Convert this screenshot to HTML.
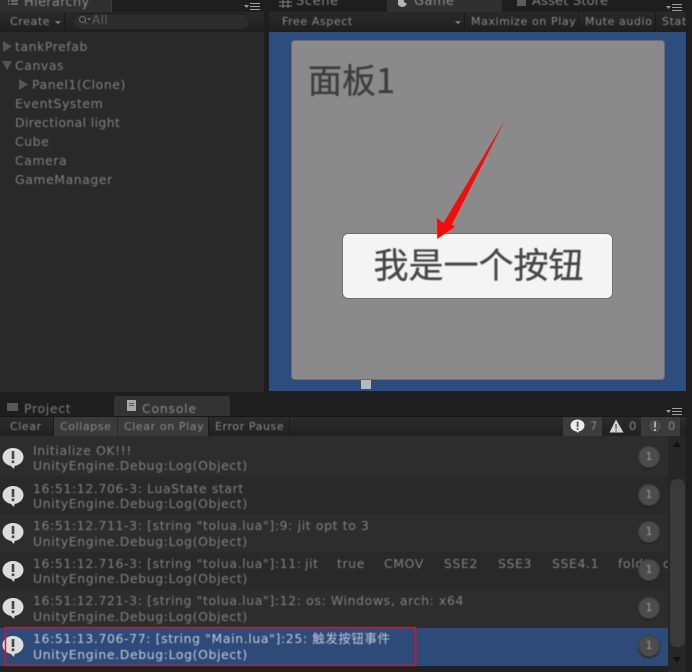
<!DOCTYPE html>
<html><head><meta charset="utf-8">
<style>
html,body{margin:0;padding:0;background:#1e1e1e;}
#p{position:relative;width:692px;height:672px;overflow:hidden;background:#1e1e1e;font-family:"DejaVu Sans","Noto Sans CJK SC",sans-serif;color:#8c8c8c;font-size:12px;}
#p div{position:absolute;white-space:nowrap;}
.t{filter:blur(.4px);}
.tb{font-size:11px;color:#8a8a8a;letter-spacing:.6px;line-height:20px;top:0;}
.h{left:15px;font-size:12.4px;line-height:19px;color:#808080;letter-spacing:.6px;}
.row{left:0;width:668px;height:38px;}
.l{left:33px;font-size:12.4px;line-height:15.5px;color:#808080;letter-spacing:.65px;}
.b{left:638px;width:22px;height:22px;border-radius:50%;background:#4c4c4c;box-shadow:0 1px 1px #1a1a1a,inset 0 0 0 1px #3d3d3d;color:#999;font-size:11px;line-height:22px;text-align:center;}
</style></head><body><div id="p">

<!-- Hierarchy tab -->
<div style="left:0;top:0;width:111px;height:12px;background:#2f2f2f;border-right:1px solid #3a3a3a;"></div>
<svg style="position:absolute;left:7px;top:0" width="12" height="8"><path d="M1 1h1.500M4 1h7M1 4h1.500M4 4h7" stroke="#8a8a8a" stroke-width="1.300"/></svg>
<div class="t" style="left:24px;top:-6px;font-size:13px;line-height:17px;letter-spacing:.3px;color:#8a8a8a;">Hierarchy</div>
<svg style="position:absolute;left:244px;top:2px" width="18" height="9"><path d="M0 3h5l-2.500 3z" fill="#9a9a9a"/><path d="M6 1.500h10M6 4.500h10M6 7.500h10" stroke="#a0a0a0" stroke-width="1.100"/></svg>

<!-- Hierarchy toolbar -->
<div style="left:0;top:12px;width:264px;height:20px;background:linear-gradient(#2a2a2a,#1f1f1f);"></div>
<div class="t tb" style="left:10px;top:12px;">Create</div>
<svg style="position:absolute;left:55px;top:21px" width="6" height="4"><path d="M0 0h6l-3 3.500z" fill="#777"/></svg>
<div style="left:64px;top:12px;width:1px;height:20px;background:#1a1a1a;"></div>
<div style="left:73px;top:13px;width:176px;height:16px;border-radius:8px;background:#2c2c2c;box-shadow:inset 0 1px 1px #1b1b1b;"></div>
<svg style="position:absolute;left:78px;top:15px" width="14" height="11"><circle cx="4.500" cy="4.500" r="3" fill="none" stroke="#6b6b6b" stroke-width="1.100"/><path d="M6.700 6.700l2.300 2.300" stroke="#6b6b6b"/><path d="M9 3h4l-2 2.500z" fill="#6b6b6b"/></svg>
<div class="t" style="left:92px;top:12px;font-size:12px;line-height:17px;color:#666;letter-spacing:.4px;">All</div>

<!-- Hierarchy list -->
<div style="left:0;top:32px;width:264px;height:360px;background:#292929;"></div>
<svg style="position:absolute;left:0;top:38px" width="35" height="60">
<path d="M3 3l9 5.500l-9 5.500z" fill="#555"/>
<path d="M2 23h10l-5 9z" fill="#555"/>
<path d="M19 41l9 5.500l-9 5.500z" fill="#555"/>
</svg>
<div class="t h" style="top:37px;">tankPrefab</div>
<div class="t h" style="top:56px;">Canvas</div>
<div class="t h" style="top:75px;left:32px;">Panel1(Clone)</div>
<div class="t h" style="top:94px;">EventSystem</div>
<div class="t h" style="top:113px;letter-spacing:.4px;">Directional light</div>
<div class="t h" style="top:132px;">Cube</div>
<div class="t h" style="top:151px;">Camera</div>
<div class="t h" style="top:170px;">GameManager</div>

<!-- Scene/Game tabs -->
<svg style="position:absolute;left:279px;top:0" width="14" height="9"><path d="M4 0v8M9 0v8M0 2h13M0 6h13" stroke="#808080" stroke-width="1"/></svg>
<div class="t" style="left:296px;top:-7px;font-size:13px;line-height:17px;letter-spacing:.6px;color:#808080;">Scene</div>
<div style="left:387px;top:0;width:115px;height:12px;background:#303030;"></div>
<svg style="position:absolute;left:398px;top:0" width="12" height="8"><path d="M4 -3a5 5 0 1 0 5 6.500a4 3 0 0 1-3-3.500z" fill="#b5b5b5"/></svg>
<div class="t" style="left:414px;top:-7px;font-size:13px;line-height:17px;letter-spacing:.4px;color:#8a8a8a;">Game</div>
<div style="left:517px;top:0;width:9px;height:6px;background:#5c5c5c;"></div>
<div class="t" style="left:532px;top:-7px;font-size:13px;line-height:17px;letter-spacing:.2px;color:#808080;">Asset Store</div>
<svg style="position:absolute;left:666px;top:3px" width="18" height="9"><path d="M0 3h5l-2.500 3z" fill="#9a9a9a"/><path d="M6 1.500h10M6 4.500h10M6 7.500h10" stroke="#a0a0a0" stroke-width="1.100"/></svg>

<!-- Game toolbar -->
<div style="left:269px;top:12px;width:417px;height:20px;background:linear-gradient(#2a2a2a,#1e1e1e);"></div>
<div class="t tb" style="left:282px;top:12px;">Free Aspect</div>
<svg style="position:absolute;left:455px;top:21px" width="6" height="4"><path d="M0 0h6l-3 3.500z" fill="#777"/></svg>
<div style="left:464px;top:12px;width:1px;height:20px;background:#1a1a1a;"></div>
<div class="t tb" style="left:471px;top:12px;">Maximize on Play</div>
<div style="left:578px;top:12px;width:1px;height:20px;background:#1a1a1a;"></div>
<div class="t tb" style="left:585px;top:12px;">Mute audio</div>
<div style="left:655px;top:12px;width:1px;height:20px;background:#1a1a1a;"></div>
<div class="t tb" style="left:662px;top:12px;width:24px;overflow:hidden;">Stats</div>

<!-- Game view -->
<div style="left:269px;top:32px;width:417px;height:359px;background:#2d4d7e;"></div>
<div style="left:292px;top:41px;width:372px;height:338px;background:#8a8a8a;border-radius:3px;box-shadow:0 0 0 1px #6e6e6e;"></div>
<div class="t" style="left:308px;top:57px;font-size:34px;line-height:44px;color:#3d3d3d;font-family:'Noto Sans CJK SC',sans-serif;-webkit-text-stroke:.3px #3d3d3d;">面板1</div>
<div style="left:343px;top:234px;width:269px;height:64px;background:#f4f4f4;border-radius:5px;box-shadow:0 0 0 1px #6f6f6f;"></div>
<div class="t" style="left:344px;top:233px;width:269px;height:65px;text-align:center;font-size:35px;line-height:61px;color:#464646;font-family:'Noto Sans CJK SC',sans-serif;-webkit-text-stroke:.3px #464646;">我是一个按钮</div>
<svg style="position:absolute;left:0;top:0" width="692" height="300"><path d="M504.500 121L452 224.500L455 226.700L437.300 239L437 218L443.500 223Z" fill="#f70a0a"/></svg>
<div style="left:361px;top:380px;width:10px;height:9px;background:#b9b9b9;"></div>

<!-- Console tabs -->
<div style="left:7px;top:403px;width:11px;height:8px;background:#585858;"></div>
<div class="t" style="left:24px;top:400px;font-size:12.400px;line-height:17px;letter-spacing:.7px;color:#7c7c7c;">Project</div>
<div style="left:114px;top:396px;width:116px;height:20px;background:#333;border-radius:3px 3px 0 0;"></div>
<div style="left:127px;top:400px;width:9px;height:11px;background:#a8a8a8;"></div>
<div style="left:129px;top:403px;width:5px;height:1px;background:#555;"></div>
<div style="left:129px;top:405px;width:5px;height:1px;background:#555;"></div>
<div class="t" style="left:142px;top:400px;font-size:12.400px;line-height:17px;letter-spacing:.8px;color:#8a8a8a;">Console</div>
<svg style="position:absolute;left:666px;top:407px" width="18" height="9"><path d="M0 3h5l-2.500 3z" fill="#9a9a9a"/><path d="M6 1.500h10M6 4.500h10M6 7.500h10" stroke="#a0a0a0" stroke-width="1.100"/></svg>

<!-- Console toolbar -->
<div style="left:0;top:416px;width:686px;height:20px;background:linear-gradient(#2b2b2b,#212121);border-top:1px solid #171717;box-sizing:border-box;"></div>
<div style="left:54px;top:417px;width:154px;height:19px;background:#3a3a3a;"></div>
<div style="left:53px;top:417px;width:1px;height:19px;background:#191919;"></div>
<div style="left:117px;top:417px;width:1px;height:19px;background:#2a2a2a;"></div>
<div style="left:208px;top:417px;width:1px;height:19px;background:#191919;"></div>
<div style="left:289px;top:417px;width:1px;height:19px;background:#191919;"></div>
<div class="t tb" style="left:10px;top:417px;">Clear</div>
<div class="t tb" style="left:60px;top:417px;">Collapse</div>
<div class="t tb" style="left:124px;top:417px;">Clear on Play</div>
<div class="t tb" style="left:215px;top:417px;">Error Pause</div>

<div style="left:563px;top:417px;width:39px;height:19px;background:#3c3c3c;"></div>
<div style="left:641px;top:417px;width:39px;height:19px;background:#3c3c3c;"></div>
<svg style="position:absolute;left:569px;top:419px" width="110" height="15">
<ellipse cx="8.500" cy="6.500" rx="7" ry="6" fill="#ececec"/><path d="M6 11l3 3l1-3z" fill="#ececec"/><rect x="7.700" y="2.500" width="1.800" height="5.500" fill="#555"/><rect x="7.700" y="9" width="1.800" height="1.800" fill="#555"/>
<path d="M47 0.500L40.500 13.500H54.500Z" fill="#d5d5d5"/><rect x="46.300" y="5" width="1.500" height="5" fill="#666"/><rect x="46.300" y="11" width="1.500" height="1.500" fill="#666"/>
<circle cx="86" cy="7" r="7" fill="#4a4a4a" stroke="#2f2f2f"/><rect x="85" y="2.500" width="2" height="6" fill="#aaa"/><rect x="85" y="10" width="2" height="2" fill="#aaa"/>
</svg>
<div class="t" style="left:590px;top:417px;font-size:11.500px;line-height:19px;color:#8a8a8a;">7</div>
<div class="t" style="left:629px;top:417px;font-size:11.500px;line-height:19px;color:#8a8a8a;">0</div>
<div class="t" style="left:668px;top:417px;font-size:11.500px;line-height:19px;color:#8a8a8a;">0</div>

<!-- Console rows -->
<div style="left:0;top:436px;width:668px;height:229px;background:#2d2d2d;"></div>
<div class="row" style="top:476px;background:#292929;"></div>
<div class="row" style="top:552px;background:#292929;"></div>
<div class="row" style="top:628px;background:#2d4a78;"></div>
<div style="left:0;top:666px;width:668px;height:6px;background:#212121;"></div>

<svg style="position:absolute;left:0;top:436px" width="30" height="236">
<g id="ic"><ellipse cx="13" cy="21" rx="10.500" ry="9" fill="#dcdcdc"/><path d="M9 28l5 5l1-5z" fill="#dcdcdc"/><rect x="11.700" y="15" width="2.600" height="8" fill="#444"/><rect x="11.700" y="24.500" width="2.600" height="2.600" fill="#444"/></g>
<use href="#ic" y="38"/><use href="#ic" y="75"/><use href="#ic" y="113"/><use href="#ic" y="150"/><use href="#ic" y="188"/>
</svg>

<div class="t l" style="top:442.500px;">Initialize OK!!!<br>UnityEngine.Debug:Log(Object)</div>
<div class="t l" style="top:480.500px;">16:51:12.706-3: LuaState start<br>UnityEngine.Debug:Log(Object)</div>
<div class="t l" style="top:518px;">16:51:12.711-3: [string "tolua.lua"]:9: jit opt to 3<br>UnityEngine.Debug:Log(Object)</div>
<div class="t l" style="top:555.500px;">16:51:12.716-3: [string "tolua.lua"]:11:<br>UnityEngine.Debug:Log(Object)</div>
<div class="t l" style="top:555.500px;left:305px;">jit</div>
<div class="t l" style="top:555.500px;left:337px;">true</div>
<div class="t l" style="top:555.500px;left:384px;">CMOV</div>
<div class="t l" style="top:555.500px;left:444px;">SSE2</div>
<div class="t l" style="top:555.500px;left:498px;">SSE3</div>
<div class="t l" style="top:555.500px;left:552px;">SSE4.1</div>
<div class="t l" style="top:555.500px;left:618px;">fold</div>
<div class="t l" style="top:555.500px;left:663px;width:6px;overflow:hidden;">c</div>
<div class="t l" style="top:593px;">16:51:12.721-3: [string "tolua.lua"]:12: os: Windows, arch: x64<br>UnityEngine.Debug:Log(Object)</div>
<div class="t l" style="top:631px;color:#c3cbd8;">16:51:13.706-77: [string "Main.lua"]:25: 触发按钮事件<br>UnityEngine.Debug:Log(Object)</div>

<div class="b t" style="top:446px;">1</div>
<div class="b t" style="top:484px;">1</div>
<div class="b t" style="top:521px;">1</div>
<div class="b t" style="top:559px;">1</div>
<div class="b t" style="top:597px;">1</div>
<div class="b t" style="top:635px;">1</div>

<!-- Red rectangle -->
<svg style="position:absolute;left:0;top:620px" width="430" height="52"><rect x="5.500" y="7.500" width="410" height="38" fill="none" stroke="#e01020" stroke-width="1.500"/></svg>

<!-- Scrollbar -->
<div style="left:668px;top:436px;width:18px;height:236px;background:#262626;"></div>
<svg style="position:absolute;left:671px;top:441px" width="12" height="8"><path d="M6 0l4 6H2z" fill="#111"/></svg>
<div style="left:670px;top:479px;width:15px;height:168px;background:#3a3a3a;border-radius:7px;"></div>
<svg style="position:absolute;left:671px;top:657px" width="12" height="8"><path d="M2 0h8l-4 6z" fill="#111"/></svg>
</div></body></html>
